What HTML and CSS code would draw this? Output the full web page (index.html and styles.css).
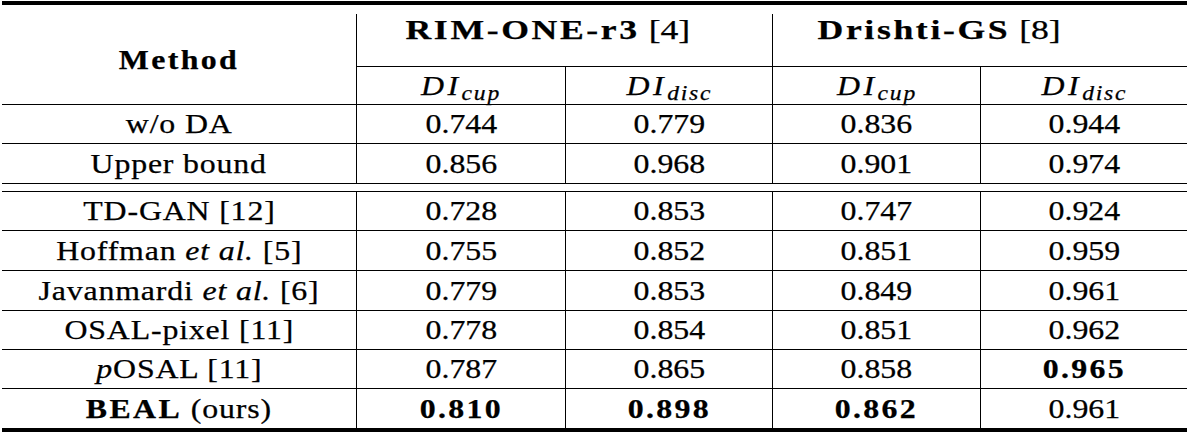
FILE: index.html
```html
<!DOCTYPE html>
<html>
<head>
<meta charset="utf-8">
<title>Results table</title>
<link rel="stylesheet" href="styles.css">
</head>
<body>
<table class="tbl">
  <colgroup>
    <col class="c1"><col class="c2"><col class="c3"><col class="c4"><col class="c5">
  </colgroup>
  <tr class="r-gap">
    <td class="method" rowspan="3"><span class="t b">Method</span></td>
    <td colspan="4" class="blank"></td>
  </tr>
  <tr class="r-h1">
    <td colspan="2" class="h1 v rim"><span class="t"><b class="b">RIM-ONE-r3</b> [4]</span></td>
    <td colspan="2" class="h1 v dri"><span class="t"><b class="b">Drishti-GS</b> [8]</span></td>
  </tr>
  <tr class="r-h2">
    <td class="h2 v"><span class="t"><i class="mi">DI</i><sub class="sb">cup</sub></span></td>
    <td class="h2 v"><span class="t"><i class="mi">DI</i><sub class="sb">disc</sub></span></td>
    <td class="h2 v"><span class="t"><i class="mi">DI</i><sub class="sb">cup</sub></span></td>
    <td class="h2 v"><span class="t"><i class="mi">DI</i><sub class="sb">disc</sub></span></td>
  </tr>
  <tr class="r39">
    <td class="m"><span class="t">w/o DA</span></td>
    <td class="v"><span class="t">0.744</span></td>
    <td class="v"><span class="t">0.779</span></td>
    <td class="v"><span class="t">0.836</span></td>
    <td class="v"><span class="t">0.944</span></td>
  </tr>
  <tr class="r40">
    <td class="m"><span class="t">Upper bound</span></td>
    <td class="v"><span class="t">0.856</span></td>
    <td class="v"><span class="t">0.968</span></td>
    <td class="v"><span class="t">0.901</span></td>
    <td class="v"><span class="t">0.974</span></td>
  </tr>
  <tr class="r-dbl">
    <td colspan="5" class="dbl"></td>
  </tr>
  <tr class="r39">
    <td class="m"><span class="t">TD-GAN [12]</span></td>
    <td class="v"><span class="t">0.728</span></td>
    <td class="v"><span class="t">0.853</span></td>
    <td class="v"><span class="t">0.747</span></td>
    <td class="v"><span class="t">0.924</span></td>
  </tr>
  <tr class="r40">
    <td class="m"><span class="t">Hoffman <i>et al.</i> [5]</span></td>
    <td class="v"><span class="t">0.755</span></td>
    <td class="v"><span class="t">0.852</span></td>
    <td class="v"><span class="t">0.851</span></td>
    <td class="v"><span class="t">0.959</span></td>
  </tr>
  <tr class="r40">
    <td class="m"><span class="t">Javanmardi <i>et al.</i> [6]</span></td>
    <td class="v"><span class="t">0.779</span></td>
    <td class="v"><span class="t">0.853</span></td>
    <td class="v"><span class="t">0.849</span></td>
    <td class="v"><span class="t">0.961</span></td>
  </tr>
  <tr class="r39">
    <td class="m"><span class="t">OSAL-pixel [11]</span></td>
    <td class="v"><span class="t">0.778</span></td>
    <td class="v"><span class="t">0.854</span></td>
    <td class="v"><span class="t">0.851</span></td>
    <td class="v"><span class="t">0.962</span></td>
  </tr>
  <tr class="r39">
    <td class="m"><span class="t"><i>p</i>OSAL [11]</span></td>
    <td class="v"><span class="t">0.787</span></td>
    <td class="v"><span class="t">0.865</span></td>
    <td class="v"><span class="t">0.858</span></td>
    <td class="v"><span class="t b">0.965</span></td>
  </tr>
  <tr class="r39 last">
    <td class="m"><span class="t"><b class="b">BEAL</b> (ours)</span></td>
    <td class="v"><span class="t b">0.810</span></td>
    <td class="v"><span class="t b">0.898</span></td>
    <td class="v"><span class="t b">0.862</span></td>
    <td class="v"><span class="t">0.961</span></td>
  </tr>
</table>
</body>
</html>
```
FILE: styles.css
```css
html, body {
  margin: 0;
  padding: 0;
  background: #fff;
}
body {
  font-family: "Liberation Serif", "Times New Roman", serif;
  font-size: 27px;
  line-height: 30px;
  color: #000;
  -webkit-text-stroke: 0.25px #000;
}
.tbl {
  margin: 1px 0 0 2px;
  width: 1185px;
  table-layout: fixed;
  border-collapse: separate;
  border-spacing: 0;
  border-top: 4px solid #000;
  border-bottom: 4px solid #000;
}
.c1 { width: 354px; }
.c2 { width: 209px; }
.c3 { width: 207px; }
.c4 { width: 208px; }
.c5 { width: 207px; }

.tbl td {
  padding: 0;
  text-align: center;
  vertical-align: middle;
  white-space: nowrap;
  border-bottom: 1px solid #000;
}
.tbl .last td { border-bottom: none; }
.tbl td.blank { border-bottom: none; }
.tbl td.v { border-left: 1px solid #000; }

.r-gap { height: 9px; }
.r-h1 { height: 53px; }
.r-h2 { height: 38px; }
.r39 { height: 39px; }
.r40 { height: 40px; }
.r-dbl { height: 8px; }

.method {
  vertical-align: top !important;
  padding-top: 40px !important;
}
.h1 {
  vertical-align: top !important;
  padding-top: 1px !important;
}
.rim { padding-right: 34px !important; }
.dri { padding-right: 82px !important; }

.t {
  display: inline-block;
  transform: scaleX(1.18);
}
.h1 .t { transform: scaleX(1.32); }
.b {
  font-weight: bold;
  letter-spacing: 2px;
}
.m .t { letter-spacing: 0.7px; }
.mi {
  letter-spacing: 3px;
}
.sb {
  font-style: italic;
  font-size: 20px;
  line-height: 0;
  vertical-align: -5px;
  letter-spacing: 1.5px;
}
```
